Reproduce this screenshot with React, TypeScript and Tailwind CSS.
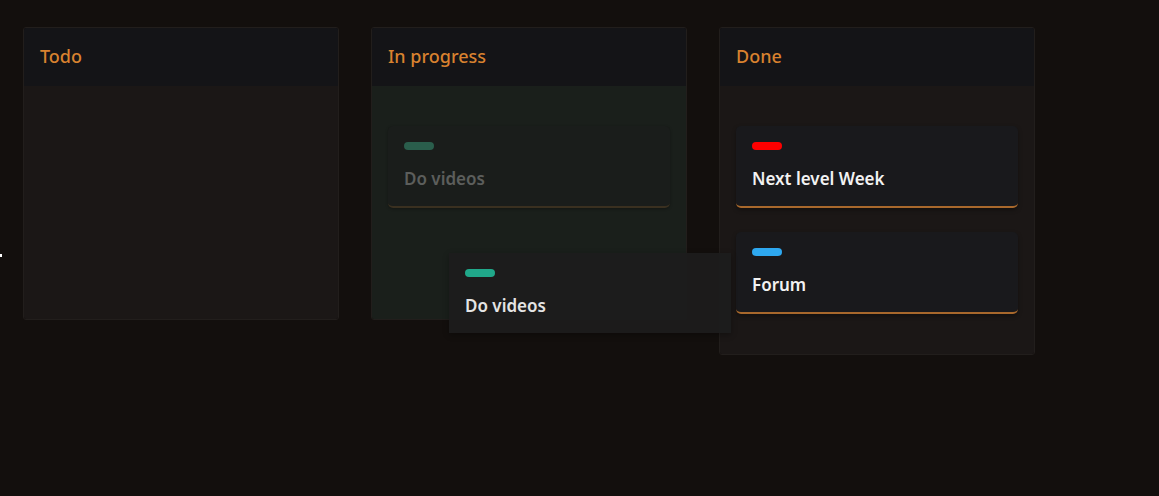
import React from "react";

type Card = { title: string; color: string };

function TaskCard({ card, ghost }: { card: Card; ghost?: boolean }) {
  return (
    <div
      className={
        "h-[82px] rounded-[5px] border-b-2 px-4 pt-4 " +
        (ghost
          ? "bg-[#1a1d1b] border-[#3a3020] shadow-[0_1px_3px_rgba(0,0,0,0.3)]"
          : "bg-[#19191c] border-[#a8682c] shadow-[0_2px_4px_rgba(0,0,0,0.35)]")
      }
    >
      <div
        className="h-2 w-[30px] rounded-full"
        style={{ backgroundColor: card.color }}
      />
      <div
        className={
          "mt-[18px] text-[17px] font-semibold leading-[22px] " +
          (ghost ? "text-[#5c5e5c]" : "text-[#f2f2f2]")
        }
      >
        {card.title}
      </div>
    </div>
  );
}

function Column({
  title,
  cards,
  bodyClass,
}: {
  title: string;
  cards?: React.ReactNode;
  bodyClass: string;
}) {
  return (
    <div className="w-[316px] rounded-[3px] border border-[#221e1c] overflow-hidden self-start">
      <div className="h-[58px] bg-[#141417] flex items-center px-4 pb-[2px] text-[18px] font-medium text-[#d9822f]">
        {title}
      </div>
      <div className={"min-h-[233px] flex flex-col gap-[24px] px-4 pt-[40px] pb-[40px] " + bodyClass}>
        {cards}
      </div>
    </div>
  );
}

export default function App() {
  return (
    <div
      className="relative w-[1159px] h-[496px] bg-[#130f0d] overflow-hidden"
      style={{ fontFamily: '"Noto Sans", Lato, sans-serif' }}
    >
      <div className="flex gap-8 pl-[23px] pt-[27px]">
        <Column title="Todo" bodyClass="bg-[#1b1716]" />
        <Column
          title="In progress"
          bodyClass="bg-[#1a1f1b]"
          cards={<TaskCard ghost card={{ title: "Do videos", color: "#2a5e4c" }} />}
        />
        <Column
          title="Done"
          bodyClass="bg-[#1b1716]"
          cards={
            <>
              <TaskCard card={{ title: "Next level Week", color: "#ff0000" }} />
              <TaskCard card={{ title: "Forum", color: "#2ea8f0" }} />
            </>
          }
        />
      </div>

      {/* drag overlay */}
      <div className="absolute left-[449px] top-[253px] w-[282px] h-[80px] bg-[#1c1c1c]/95 px-4 pt-4 shadow-[0_2px_6px_rgba(0,0,0,0.3)]">
        <div className="h-2 w-[30px] rounded-full bg-[#20a88a]" />
        <div className="mt-[18px] text-[17px] font-semibold leading-[22px] text-[#e4e4e4]">
          Do videos
        </div>
      </div>

      {/* cursor remnant */}
      <div className="absolute left-0 top-[254px] w-[2px] h-[3px] bg-white" />
    </div>
  );
}
